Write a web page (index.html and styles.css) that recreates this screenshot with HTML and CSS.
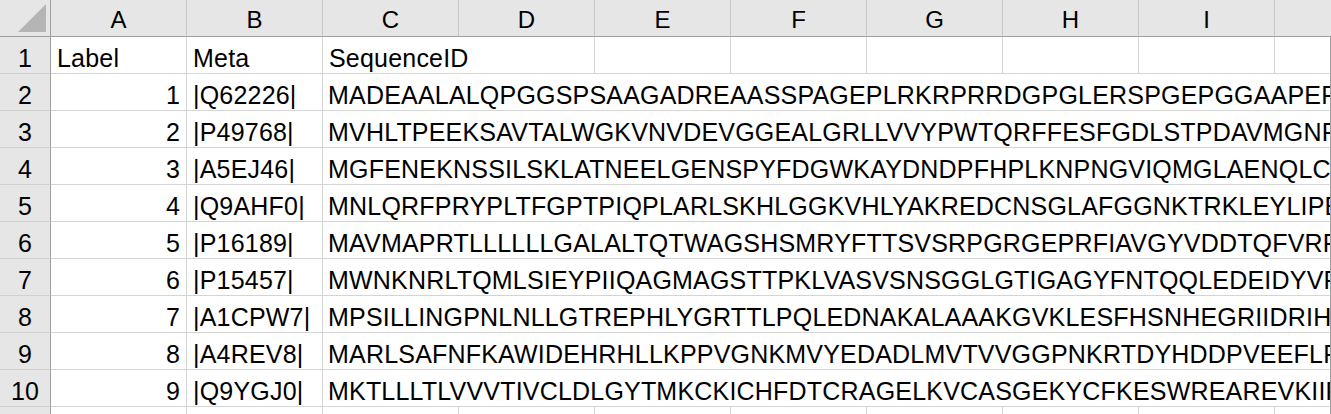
FILE: index.html
```html
<!DOCTYPE html>
<html lang="en">
<head>
<meta charset="utf-8">
<title>Sheet</title>
<link rel="stylesheet" href="styles.css">
</head>
<body>
<div class="sheet">
  <div class="corner"><svg class="corner-tri" width="30" height="30" viewBox="0 0 30 30"><polygon points="1,29 29,29 29,1" fill="#b5b5b5"/></svg></div>
  <div class="colhead">A</div>
  <div class="colhead">B</div>
  <div class="colhead">C</div>
  <div class="colhead">D</div>
  <div class="colhead">E</div>
  <div class="colhead">F</div>
  <div class="colhead">G</div>
  <div class="colhead">H</div>
  <div class="colhead">I</div>
  <div class="colhead last"></div>

  <div class="rowhead">1</div>
  <div class="cell">Label</div>
  <div class="cell">Meta</div>
  <div class="cell span2">SequenceID</div>
  <div class="cell"></div>
  <div class="cell"></div>
  <div class="cell"></div>
  <div class="cell"></div>
  <div class="cell"></div>
  <div class="cell edge"></div>

  <div class="rowhead">2</div>
  <div class="cell num">1</div>
  <div class="cell">|Q62226|</div>
  <div class="cell seq edge">MADEAALALQPGGSPSAAGADREAASSPAGEPLRKRPRRDGPGLERSPGEPGGAAPERLAVSTGELRQ</div>

  <div class="rowhead">3</div>
  <div class="cell num">2</div>
  <div class="cell">|P49768|</div>
  <div class="cell seq edge">MVHLTPEEKSAVTALWGKVNVDEVGGEALGRLLVVYPWTQRFFESFGDLSTPDAVMGNPKVKAHGKKVLG</div>

  <div class="rowhead">4</div>
  <div class="cell num">3</div>
  <div class="cell">|A5EJ46|</div>
  <div class="cell seq edge">MGFENEKNSSILSKLATNEELGENSPYFDGWKAYDNDPFHPLKNPNGVIQMGLAENQLCLDLIEEWIK</div>

  <div class="rowhead">5</div>
  <div class="cell num">4</div>
  <div class="cell">|Q9AHF0|</div>
  <div class="cell seq edge">MNLQRFPRYPLTFGPTPIQPLARLSKHLGGKVHLYAKREDCNSGLAFGGNKTRKLEYLIPEALAQGCD</div>

  <div class="rowhead">6</div>
  <div class="cell num">5</div>
  <div class="cell">|P16189|</div>
  <div class="cell seq edge">MAVMAPRTLLLLLLGALALTQTWAGSHSMRYFTTSVSRPGRGEPRFIAVGYVDDTQFVRFDSDAASQR</div>

  <div class="rowhead">7</div>
  <div class="cell num">6</div>
  <div class="cell">|P15457|</div>
  <div class="cell seq edge">MWNKNRLTQMLSIEYPIIQAGMAGSTTPKLVASVSNSGGLGTIGAGYFNTQQLEDEIDYVRQLTDKPF</div>

  <div class="rowhead">8</div>
  <div class="cell num">7</div>
  <div class="cell">|A1CPW7|</div>
  <div class="cell seq edge">MPSILLINGPNLNLLGTREPHLYGRTTLPQLEDNAKALAAAKGVKLESFHSNHEGRIIDRIHEAKGKA</div>

  <div class="rowhead">9</div>
  <div class="cell num">8</div>
  <div class="cell">|A4REV8|</div>
  <div class="cell seq edge">MARLSAFNFKAWIDEHRHLLKPPVGNKMVYEDADLMVTVVGGPNKRTDYHDDPVEEFLRRVADHPFT</div>

  <div class="rowhead">10</div>
  <div class="cell num">9</div>
  <div class="cell">|Q9YGJ0|</div>
  <div class="cell seq edge">MKTLLLTLVVVTIVCLDLGYTMKCKICHFDTCRAGELKVCASGEKYCFKESWREAREVKIIRGCAAT</div>

  <div class="rowhead"></div>
  <div class="cell"></div>
  <div class="cell"></div>
  <div class="cell"></div>
  <div class="cell"></div>
  <div class="cell"></div>
  <div class="cell"></div>
  <div class="cell"></div>
  <div class="cell"></div>
  <div class="cell"></div>
  <div class="cell edge"></div>
</div>
</body>
</html>
```

FILE: styles.css
```css
html, body {
  margin: 0;
  padding: 0;
  background: #ffffff;
  overflow: hidden;
}

.sheet {
  display: grid;
  grid-template-columns: 51px repeat(9, 136px) 56px;
  grid-template-rows: 37px repeat(11, 37px);
  width: 1331px;
  height: 414px;
  overflow: hidden;
  font-family: "Liberation Sans", Arial, sans-serif;
  font-size: 25px;
  letter-spacing: 0.2px;
  color: #000000;
}

.corner {
  background: #e6e6e6;
  border-right: 1px solid #9e9e9e;
  border-bottom: 1px solid #9e9e9e;
  box-sizing: border-box;
  display: flex;
  justify-content: flex-end;
  align-items: flex-end;
  padding: 0 3px 3px 0;
}

.corner-tri {
  display: block;
}

.colhead {
  background: #e6e6e6;
  border-right: 1px solid #c6c6c6;
  border-bottom: 1px solid #9e9e9e;
  box-sizing: border-box;
  display: flex;
  justify-content: center;
  align-items: flex-end;
  font-size: 24px;
  letter-spacing: 0;
  line-height: 30px;
  padding-bottom: 1px;
}

.colhead.last {
  border-right: none;
}

.rowhead {
  background: #e6e6e6;
  border-right: 1px solid #9e9e9e;
  border-bottom: 1px solid #d0d0d0;
  box-sizing: border-box;
  display: flex;
  justify-content: center;
  align-items: flex-end;
  line-height: 30px;
  letter-spacing: 0;
}

.cell {
  border-right: 1px solid #d4d4d4;
  border-bottom: 1px solid #d4d4d4;
  box-sizing: border-box;
  display: flex;
  align-items: flex-end;
  line-height: 30px;
  padding: 0 6px 0 6px;
  white-space: nowrap;
  overflow: hidden;
}

.cell.num {
  justify-content: flex-end;
}

.cell.span2 {
  grid-column: span 2;
  overflow: visible;
}

.cell.seq {
  grid-column: span 8;
  padding-left: 5px;
  padding-right: 0;
}

.cell.edge {
  border-right: 1px solid #9e9e9e;
}
```
